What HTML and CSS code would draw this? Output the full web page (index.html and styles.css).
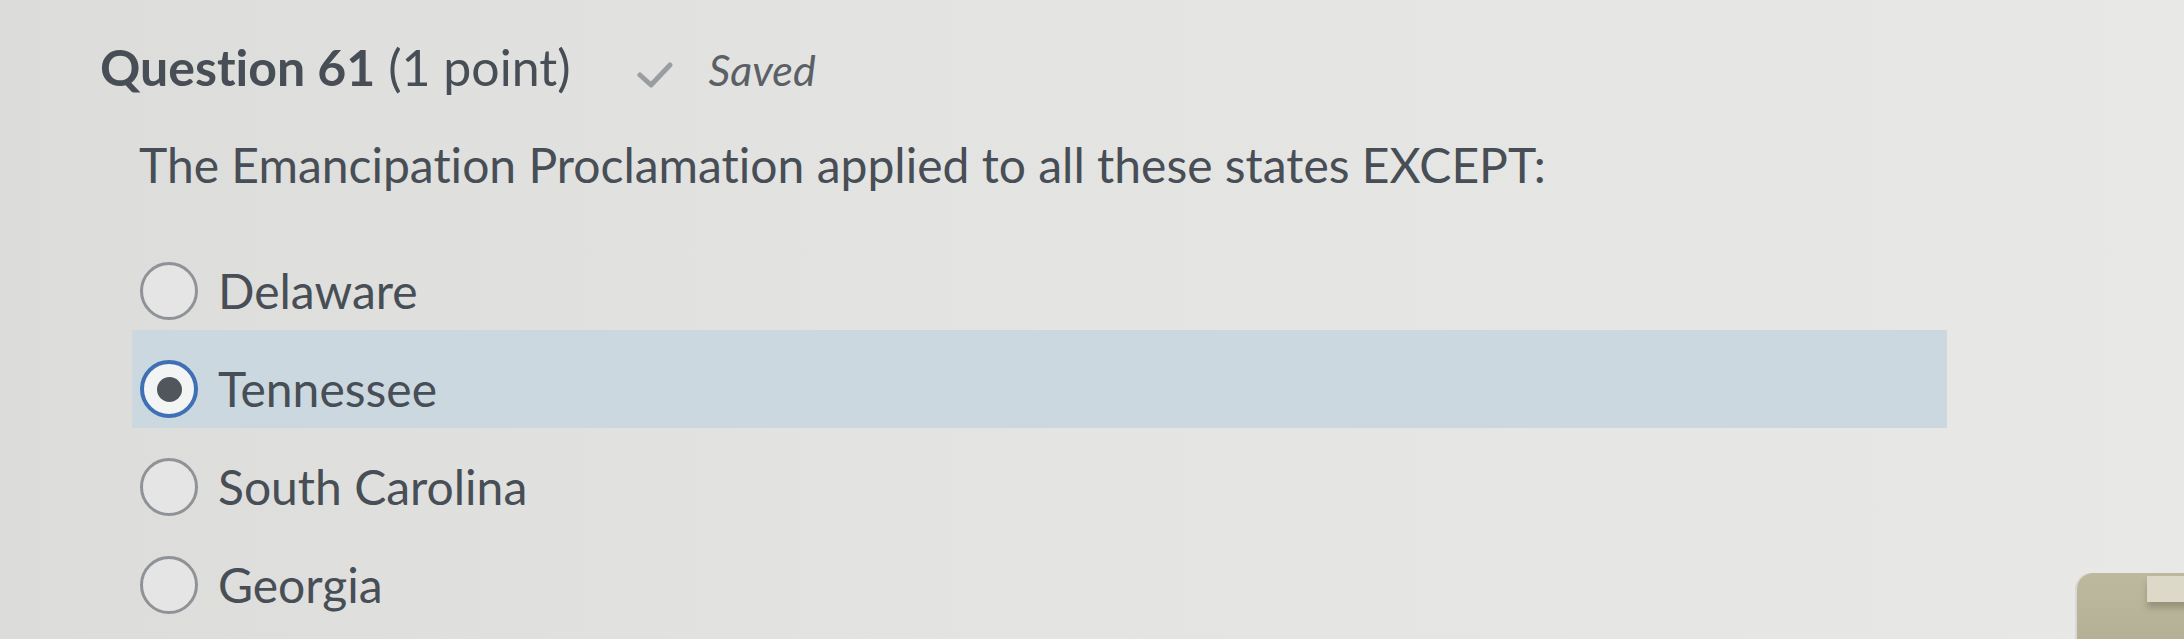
FILE: index.html
```html
<!DOCTYPE html>
<html lang="en">
<head>
<meta charset="utf-8">
<title>Question 61</title>
<link rel="stylesheet" href="styles.css">
</head>
<body>
<main class="page">
  <header class="q-head">
    <h1 class="q-title"><strong>Question 61</strong> <span class="pts">(1 point)</span></h1>
    <span class="saved">
      <svg class="check" viewBox="0 0 36 26" width="36" height="26" aria-hidden="true"><path d="M3 13 L14 23 L33 3" fill="none" stroke="#9a9ea3" stroke-width="5" stroke-linecap="round" stroke-linejoin="round"/></svg>
      <em class="saved-text">Saved</em>
    </span>
  </header>
  <p class="q-text">The Emancipation Proclamation applied to all these states EXCEPT:</p>
  <ul class="options">
    <li class="option"><span class="radio"></span><span class="label">Delaware</span></li>
    <li class="option selected"><span class="radio"></span><span class="label">Tennessee</span></li>
    <li class="option"><span class="radio"></span><span class="label">South Carolina</span></li>
    <li class="option"><span class="radio"></span><span class="label">Georgia</span></li>
  </ul>
  <div class="corner-object"><span class="corner-tab"></span></div>
</main>
</body>
</html>
```
FILE: styles.css
```css
html, body {
  margin: 0;
  padding: 0;
}
body {
  width: 2184px;
  height: 639px;
  overflow: hidden;
  background: linear-gradient(90deg, #dcdcda 0%, #e3e3e1 40%, #e8e8e6 100%);
  font-family: Lato, "Open Sans", sans-serif;
  font-variant-ligatures: none;
  color: #474e56;
}
.page {
  position: relative;
  height: 639px;
  padding: 38px 0 0 100px;
  box-sizing: border-box;
}
.q-head {
  display: flex;
  align-items: baseline;
  gap: 66px;
  height: 58px;
}
.q-title {
  margin: 0;
  font-size: 50px;
  line-height: 58px;
  font-weight: 400;
}
.q-title strong {
  font-weight: 700;
}
.saved {
  display: flex;
  align-items: baseline;
  gap: 36px;
}
.check {
  position: relative;
  top: 2px;
}
.saved-text {
  font-size: 43px;
  font-style: italic;
  color: #5b6066;
}
.q-text {
  margin: 40px 0 0 39px;
  font-size: 48px;
  line-height: 58px;
}
.options {
  list-style: none;
  margin: 38px 0 0 32px;
  padding: 0;
  width: 1815px;
}
.option {
  display: flex;
  align-items: center;
  box-sizing: border-box;
  height: 98px;
  padding: 20px 0 0 8px;
  gap: 20px;
}
.option.selected {
  background: #ccd8df;
}
.radio {
  width: 58px;
  height: 58px;
  box-sizing: border-box;
  border-radius: 50%;
  border: 3px solid #8f9398;
  background: #e4e5e4;
  display: flex;
  align-items: center;
  justify-content: center;
  flex: none;
}
.option.selected .radio {
  border: 4px solid #3f6fb4;
  background: #f3f4f4;
}
.option.selected .radio::after {
  content: "";
  width: 25px;
  height: 25px;
  border-radius: 50%;
  background: #50565c;
}
.label {
  font-size: 48px;
  line-height: 58px;
}
.corner-object {
  position: absolute;
  left: 2077px;
  top: 573px;
  width: 130px;
  height: 90px;
  border-radius: 16px 0 0 0;
  background: linear-gradient(180deg, #bdb99e 0%, #b2ae93 100%);
  box-shadow: -2px 0 0 #d8d8d4;
}
.corner-tab {
  position: absolute;
  left: 70px;
  top: 3px;
  width: 60px;
  height: 26px;
  background: #dcd9c9;
  box-shadow: 0 6px 6px rgba(110, 106, 86, 0.45);
}
```
